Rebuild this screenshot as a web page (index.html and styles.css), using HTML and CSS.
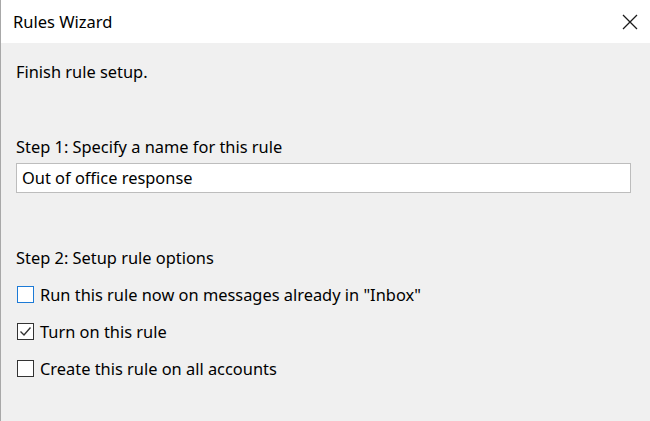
FILE: index.html
```html
<!DOCTYPE html>
<html>
<head>
<meta charset="utf-8">
<link rel="stylesheet" href="styles.css">
</head>
<body>
<div class="window">
  <div class="titlebar">
    <span class="title">Rules Wizard</span>
    <svg class="close" width="16" height="16" viewBox="0 0 16 16"><path d="M1 1 L15 15 M15 1 L1 15" stroke="#1a1a1a" stroke-width="1.3" fill="none"/></svg>
  </div>
  <div class="content">
    <div class="intro">Finish rule setup.</div>
    <div class="step1">Step 1: Specify a name for this rule</div>
    <div class="input">Out of office response</div>
    <div class="step2">Step 2: Setup rule options</div>
    <div class="options">
      <div class="opt"><span class="cb focus"></span><span>Run this rule now on messages already in "Inbox"</span></div>
      <div class="opt"><span class="cb"><svg width="15" height="15" viewBox="0 0 15 15"><path d="M2.5 7.5 L6 11 L12.5 3.5" stroke="#333" stroke-width="1.4" fill="none"/></svg></span><span>Turn on this rule</span></div>
      <div class="opt"><span class="cb"></span><span>Create this rule on all accounts</span></div>
    </div>
  </div>
</div>
</body>
</html>
```
FILE: styles.css
```css
html, body { margin: 0; padding: 0; }
body { width: 650px; height: 421px; overflow: hidden; font-family: "Noto Sans", "Open Sans", sans-serif; font-size: 16.4px; color: #000; }
.window { width: 650px; height: 421px; box-sizing: border-box; border-left: 1px solid #a8a8a8; background: #f0f0f0; display: flex; flex-direction: column; }
.titlebar { height: 43px; background: #fff; display: flex; align-items: center; justify-content: space-between; padding: 0 12px 0 12px; flex: none; }
.title { font-size: 16.5px; line-height: 22px; }
.close { display: block; margin-top: 0; }
.content { padding: 18px 19px 0 15px; display: flex; flex-direction: column; }
.intro, .step1, .step2 { line-height: 22px; }
.step1 { margin-top: 53px; }
.input { margin-top: 5px; height: 30px; box-sizing: border-box; border: 1px solid #bdbdbd; background: #fff; padding: 0 5px; line-height: 28px; }
.step2 { margin-top: 54px; }
.options { margin-top: 14px; display: flex; flex-direction: column; gap: 15px; }
.opt { display: flex; align-items: center; height: 22px; gap: 6px; padding-left: 1px; }
.cb { width: 17px; height: 17px; box-sizing: border-box; border: 1px solid #333; background: #fff; display: flex; align-items: center; justify-content: center; flex: none; }
.cb.focus { border-color: #1c7ad6; }
.cb svg { display: block; }
```
